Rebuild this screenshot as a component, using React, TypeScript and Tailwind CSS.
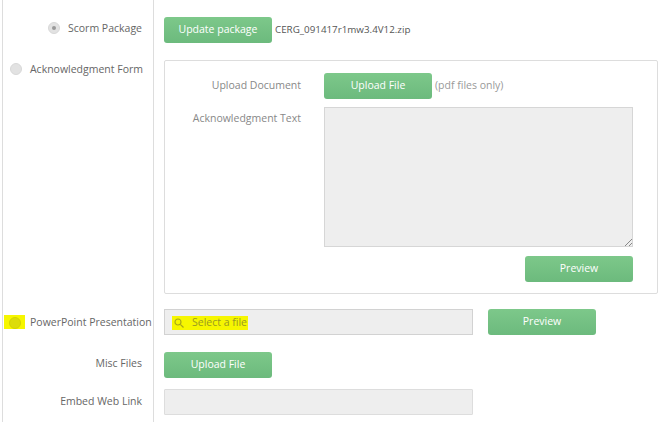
import React from "react";

const font = { fontFamily: '"Open Sans", sans-serif' };

function Radio({ checked, hl }: { checked?: boolean; hl?: boolean }) {
  return (
    <span
      className={
        "mt-[2px] flex h-[12px] w-[12px] shrink-0 items-center justify-center rounded-full border " +
        (hl ? "border-[#d4d400] bg-[#dcdc0a]" : "border-[#d8d8d8] bg-[#e2e2e2]")
      }
    >
      {checked && <span className="h-[4px] w-[4px] rounded-full bg-[#999999]" />}
    </span>
  );
}

function Btn({ label, w }: { label: string; w: string }) {
  return (
    <button
      className={
        "flex h-[26px] shrink-0 items-center justify-center rounded-[3px] bg-gradient-to-b from-[#7dc88a] to-[#6cba7d] text-[10.5px] font-medium text-white " +
        w
      }
    >
      {label}
    </button>
  );
}

function Row({ className, labelClass, children, label }: { className: string; labelClass?: string; children: React.ReactNode; label: React.ReactNode }) {
  return (
    <div className={"flex " + className}>
      <div className={"flex w-[151px] shrink-0 items-start border-r border-[#dddddd] text-[10.5px] text-[#666666] " + (labelClass ?? "")}>
        {label}
      </div>
      <div className="min-w-0 flex-1 pl-[10px]">{children}</div>
    </div>
  );
}

export default function App() {
  return (
    <div style={font} className="h-[422px] w-[661px] overflow-hidden bg-white pl-[2px]">
      <div className="h-full border-l border-[#dddddd]">
        <Row
          className="h-[51px]"
          labelClass="justify-end gap-[8px] pr-[11px] pt-[20px]"
          label={
            <>
              <Radio checked />
              <span className="leading-[16px]">Scorm Package</span>
            </>
          }
        >
          <div className="flex items-center gap-[3px] pt-[17px]">
            <Btn label="Update package" w="w-[108px]" />
            <span className="text-[9.8px] text-[#555555]">CERG_091417r1mw3.4V12.zip</span>
          </div>
        </Row>

        <Row
          className="h-[258px]"
          labelClass="justify-end gap-[8px] pr-[10px] pt-[10px]"
          label={
            <>
              <Radio />
              <span className="leading-[16px]">Acknowledgment Form</span>
            </>
          }
        >
          <div className="mt-[9px] mr-[3px] h-[234px] rounded-[2px] border border-[#dddddd] pt-[12px]">
            <div className="flex items-center">
              <span className="w-[136px] text-right text-[10.5px] text-[#888888]">Upload Document</span>
              <span className="ml-[23px]">
                <Btn label="Upload File" w="w-[108px]" />
              </span>
              <span className="ml-[3px] text-[10.5px] text-[#999999]">(pdf files only)</span>
            </div>
            <div className="mt-[8px] flex items-start">
              <span className="w-[136px] pt-[4px] text-right text-[10.5px] text-[#888888]">Acknowledgment Text</span>
              <div className="relative ml-[23px] h-[140px] w-[309px] border border-[#d6d6d6] bg-[#eeeeee]">
                <svg className="absolute right-0 bottom-0" width="8" height="8" viewBox="0 0 8 8" stroke="#888888" fill="none">
                  <path d="M1 8L8 1M5 8L8 5" />
                </svg>
              </div>
            </div>
            <div className="mt-[9px] flex justify-end pr-[24px]">
              <Btn label="Preview" w="w-[108px]" />
            </div>
          </div>
        </Row>

        <Row
          className="h-[43px]"
          labelClass="gap-[5px] pl-[1px] pt-[5px]"
          label={
            <>
              <span className="mt-[1px] flex h-[14px] w-[21px] shrink-0 items-center justify-center bg-[#f6f600]">
                <Radio hl />
              </span>
              <span className="whitespace-nowrap leading-[16px]">PowerPoint Presentation</span>
            </>
          }
        >
          <div className="flex items-start gap-[15px]">
            <div className="flex h-[26px] w-[309px] items-center border border-[#d2d2d2] bg-[#eeeeee] pl-[7px]">
              <div className="mt-[2px] flex h-[14px] items-center gap-[8px] bg-[#f6f600] pl-[2px] pr-[1px] text-[10.5px] text-[#9a9a20]">
                <svg width="10" height="10" viewBox="0 0 10 10" fill="none" stroke="#a8a818" strokeWidth="1.2">
                  <circle cx="4" cy="4" r="3" />
                  <path d="M6.3 6.3L9.5 9.5" />
                </svg>
                <span>Select a file</span>
              </div>
            </div>
            <Btn label="Preview" w="w-[108px]" />
          </div>
        </Row>

        <Row
          className="h-[37px]"
          labelClass="justify-end pr-[11px] pt-[3px]"
          label={<span className="leading-[16px]">Misc Files</span>}
        >
          <Btn label="Upload File" w="w-[108px]" />
        </Row>

        <Row
          className="h-[33px]"
          labelClass="justify-end pr-[11px] pt-[4px]"
          label={<span className="leading-[16px]">Embed Web Link</span>}
        >
          <div className="h-[26px] w-[309px] rounded-[1px] border border-[#dddddd] bg-[#eeeeee]" />
        </Row>
      </div>
    </div>
  );
}
